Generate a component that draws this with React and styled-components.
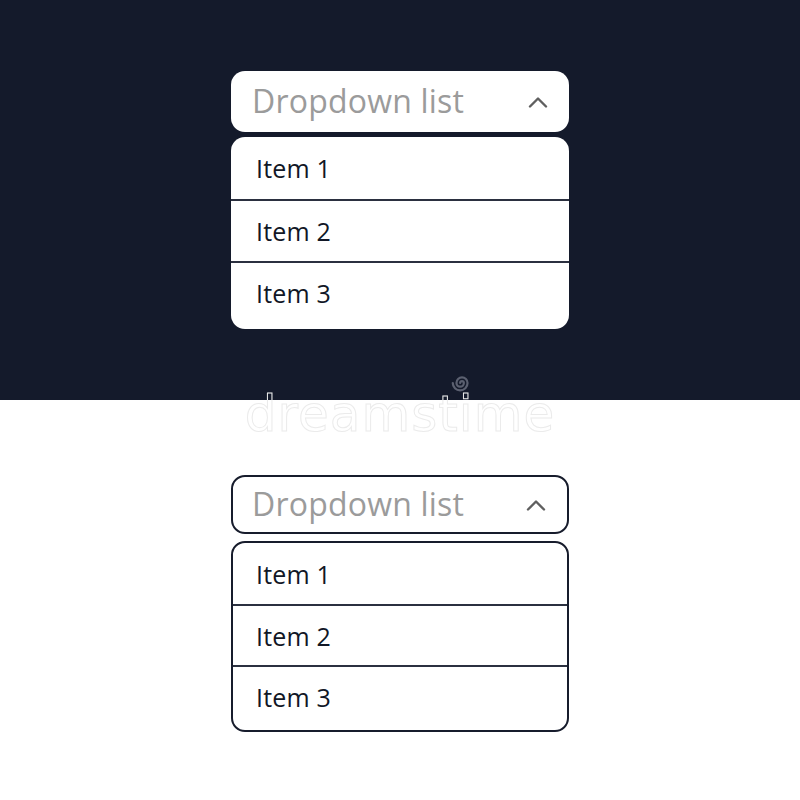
import React from "react";
import styled, { createGlobalStyle, css } from "styled-components";

const GlobalStyle = createGlobalStyle`
  html, body {
    margin: 0;
    padding: 0;
    background: #ffffff;
    font-family: "Open Sans", "Noto Sans", sans-serif;
  }
`;

const Panel = styled.section`
  position: relative;
  height: 400px;
  display: flex;
  justify-content: center;
  align-items: flex-start;
  padding-top: ${(p) => (p.$dark ? "71px" : "75px")};
  box-sizing: border-box;
  background: ${(p) => (p.$dark ? "#141a2b" : "#ffffff")};
`;

const Dropdown = styled.div`
  width: 338px;
  display: flex;
  flex-direction: column;
  gap: ${(p) => (p.$outlined ? "7px" : "5px")};
`;

const boxStyle = css`
  background: #ffffff;
  border-radius: 14px;
  box-sizing: border-box;
  ${(p) => p.$outlined && "border: 2px solid #171c2c;"}
`;

const Header = styled.div`
  ${boxStyle}
  height: ${(p) => (p.$outlined ? "59px" : "61px")};
  display: flex;
  align-items: center;
  justify-content: space-between;
  padding: 0 21px 0 ${(p) => (p.$outlined ? "19px" : "21px")};
`;

const Placeholder = styled.span`
  font-size: 32px;
  color: #9b9b9b;
  letter-spacing: 0.2px;
  line-height: 1;
  margin-top: -2px;
`;

const List = styled.div`
  ${boxStyle}
  display: flex;
  flex-direction: column;
  padding-bottom: ${(p) => (p.$outlined ? "4px" : "6px")};
  overflow: hidden;
`;

const Item = styled.div`
  height: ${(p) => (p.$outlined ? "61px" : "62px")};
  display: flex;
  align-items: center;
  padding-left: ${(p) => (p.$outlined ? "23px" : "25px")};
  font-size: 25px;
  color: #111726;
  letter-spacing: 0.2px;
  box-sizing: border-box;
  & + & {
    border-top: 2px solid #2b3040;
  }
`;

const Watermark = styled.div`
  position: absolute;
  left: 0;
  right: 0;
  top: -29px;
  display: flex;
  flex-direction: column;
  align-items: center;
  pointer-events: none;
`;

const SpiralBox = styled.div`
  margin-left: 124px;
  height: 24px;
`;

const WatermarkText = styled.span`
  font-family: "DejaVu Sans", sans-serif;
  font-size: 50px;
  letter-spacing: 1px;
  line-height: 50px;
  color: transparent;
  -webkit-text-stroke: 1px #ebebeb;
  margin-top: -6px;
`;

const Chevron = () => (
  <svg width="20" height="12" viewBox="0 0 20 12" fill="none">
    <path
      d="M2 10.5 L10 2.5 L18 10.5"
      stroke="#5f5f5f"
      strokeWidth="2.4"
      strokeLinecap="round"
      strokeLinejoin="round"
    />
  </svg>
);

const Spiral = () => (
  <svg width="24" height="24" viewBox="0 0 26 26" fill="none">
    <path
      d="M13 13 m-2 0 a2 2 0 1 1 4 0 a4 4 0 1 1 -8 0 a6 6 0 1 1 12 0 a8 8 0 1 1 -16 0"
      stroke="#5b6070"
      strokeWidth="2.4"
      strokeLinecap="round"
    />
  </svg>
);

function DropdownList({ outlined }) {
  const items = ["Item 1", "Item 2", "Item 3"];
  return (
    <Dropdown $outlined={outlined}>
      <Header $outlined={outlined}>
        <Placeholder>Dropdown list</Placeholder>
        <Chevron />
      </Header>
      <List $outlined={outlined}>
        {items.map((item) => (
          <Item key={item} $outlined={outlined}>
            {item}
          </Item>
        ))}
      </List>
    </Dropdown>
  );
}

export default function App() {
  return (
    <>
      <GlobalStyle />
      <Panel $dark>
        <DropdownList />
      </Panel>
      <Panel>
        <Watermark>
          <SpiralBox>
            <Spiral />
          </SpiralBox>
          <WatermarkText>dreamstime</WatermarkText>
        </Watermark>
        <DropdownList outlined />
      </Panel>
    </>
  );
}
